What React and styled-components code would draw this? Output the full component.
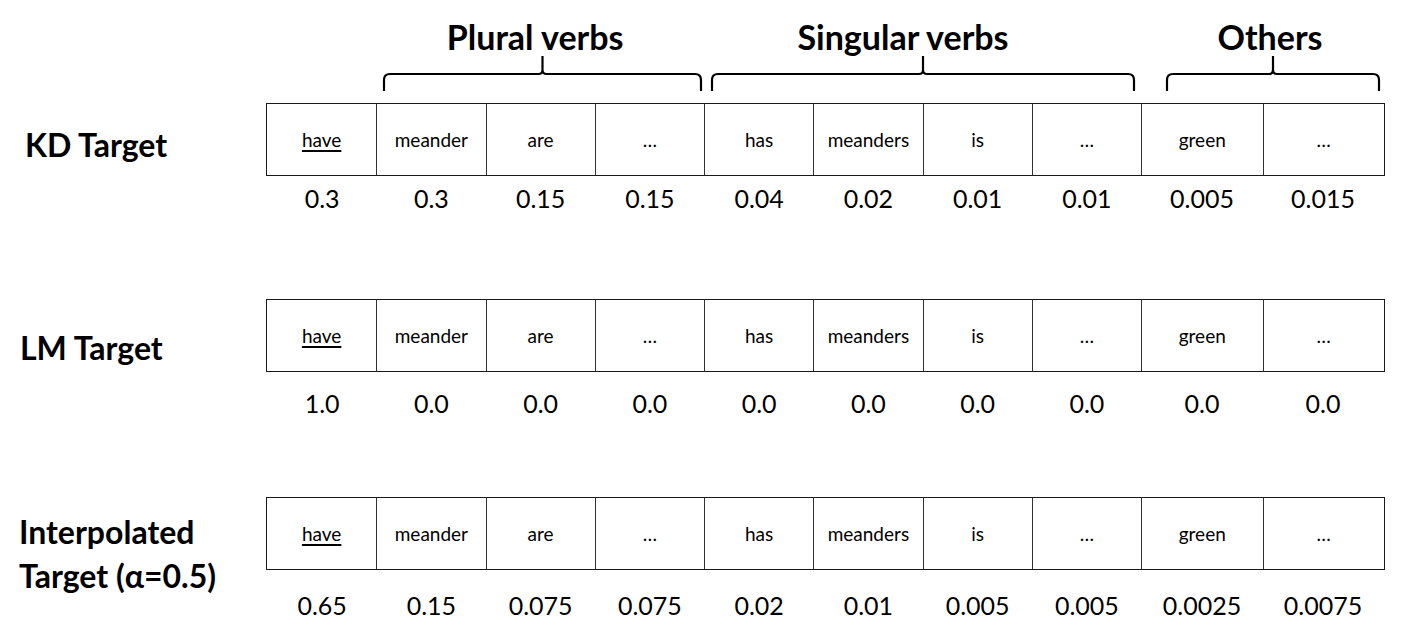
import React from "react";
import styled, { createGlobalStyle } from "styled-components";

const Global = createGlobalStyle`
  html, body { margin: 0; padding: 0; background: #ffffff; }
  body { font-family: Lato, "Open Sans", sans-serif; color: #000; }
`;

const Page = styled.div`
  width: 1409px;
  height: 631px;
  background: #fff;
  overflow: hidden;
`;

const HeaderRow = styled.div`
  display: grid;
  grid-template-columns: 266px repeat(8, 109.25px) 122.5px 122.5px;
  height: 103px;
  align-items: end;
`;

const Group = styled.div`
  grid-column: ${(p) => p.$cols};
  display: flex;
  flex-direction: column;
  padding-bottom: 11px;
`;

const GroupTitle = styled.div`
  font-family: Lato, sans-serif;
  font-weight: 700;
  font-size: 34px;
  line-height: 40px;
  text-align: center;
  padding-left: ${(p) => p.$pl || 0}px;
  padding-right: ${(p) => p.$pr || 0}px;
  margin-bottom: -2px;
  white-space: nowrap;
`;

const BraceSvg = styled.svg`
  display: block;
  margin-left: ${(p) => p.$inset}px;
  overflow: visible;
`;

function Brace({ width, inset }) {
  const h = 37;
  const mid = width / 2;
  const y = 19;
  const d = `M1,${h - 1} V${y + 6} Q1,${y} 7,${y} H${mid - 4} Q${mid},${y} ${mid},${y - 4} V1 M${mid},${y - 4} Q${mid},${y} ${mid + 4},${y} H${width - 7} Q${width - 1},${y} ${width - 1},${y + 6} V${h - 1}`;
  return (
    <BraceSvg $inset={inset} width={width} height={h} viewBox={`0 0 ${width} ${h}`}>
      <path d={d} fill="none" stroke="#000" strokeWidth="2.2" strokeLinejoin="round" />
    </BraceSvg>
  );
}

const Section = styled.div`
  display: flex;
  margin-top: ${(p) => p.$gap}px;
`;

const Label = styled.div`
  width: 266px;
  flex: none;
  box-sizing: border-box;
  padding-left: ${(p) => p.$left}px;
  padding-top: ${(p) => p.$top}px;
  font-family: Lato, sans-serif;
  font-weight: 700;
  font-size: 32px;
  line-height: ${(p) => p.$lh || 38}px;
  white-space: nowrap;
`;

const Body = styled.div`
  width: 1119px;
  display: flex;
  flex-direction: column;
`;

const Table = styled.div`
  display: grid;
  grid-template-columns: repeat(8, 109.25px) 1fr 1fr;
  height: 73px;
  box-sizing: border-box;
  border: 1.5px solid #1a1a1a;
`;

const Cell = styled.div`
  display: flex;
  align-items: center;
  justify-content: center;
  border-left: ${(p) => (p.$first ? "none" : "1px solid #333")};
  font-family: Lato, sans-serif;
  font-size: 19px;
  text-decoration: ${(p) => (p.$under ? "underline" : "none")};
  text-decoration-thickness: 1.5px;
  text-underline-offset: 3px;
`;

const Values = styled.div`
  display: grid;
  grid-template-columns: repeat(8, 109.25px) 1fr 1fr;
  padding: 0 1.5px;
  margin-top: ${(p) => p.$gap}px;
  height: 30px;
`;

const Value = styled.div`
  display: flex;
  align-items: center;
  justify-content: center;
  font-family: Lato, sans-serif;
  font-size: 25px;
`;

const tokens = ["have", "meander", "are", "…", "has", "meanders", "is", "…", "green", "…"];

const rows = [
  {
    label: ["KD Target"],
    labelTop: 23,
    labelLeft: 25,
    gap: 0,
    valGap: 7,
    values: ["0.3", "0.3", "0.15", "0.15", "0.04", "0.02", "0.01", "0.01", "0.005", "0.015"],
  },
  {
    label: ["LM Target"],
    labelTop: 30,
    labelLeft: 20,
    gap: 86,
    valGap: 16,
    values: ["1.0", "0.0", "0.0", "0.0", "0.0", "0.0", "0.0", "0.0", "0.0", "0.0"],
  },
  {
    label: ["Interpolated", "Target (α=0.5)"],
    labelTop: 13,
    labelLeft: 19,
    lh: 44,
    gap: 79,
    valGap: 20,
    values: ["0.65", "0.15", "0.075", "0.075", "0.02", "0.01", "0.005", "0.005", "0.0025", "0.0075"],
  },
];

export default function App() {
  return (
    <Page>
      <Global />
      <HeaderRow>
        <Group $cols="3 / 6">
          <GroupTitle $pr={8}>Plural verbs</GroupTitle>
          <Brace width={319} inset={8} />
        </Group>
        <Group $cols="6 / 10">
          <GroupTitle $pr={37}>Singular verbs</GroupTitle>
          <Brace width={424} inset={8} />
        </Group>
        <Group $cols="10 / 12">
          <GroupTitle $pl={15}>Others</GroupTitle>
          <Brace width={214} inset={26} />
        </Group>
      </HeaderRow>
      {rows.map((r, i) => (
        <Section key={i} $gap={r.gap}>
          <Label $top={r.labelTop} $left={r.labelLeft} $lh={r.lh}>
            {r.label.map((l, j) => (
              <div key={j}>{l}</div>
            ))}
          </Label>
          <Body>
            <Table>
              {tokens.map((t, j) => (
                <Cell key={j} $first={j === 0} $under={j === 0}>
                  {t}
                </Cell>
              ))}
            </Table>
            <Values $gap={r.valGap}>
              {r.values.map((v, j) => (
                <Value key={j}>{v}</Value>
              ))}
            </Values>
          </Body>
        </Section>
      ))}
    </Page>
  );
}
